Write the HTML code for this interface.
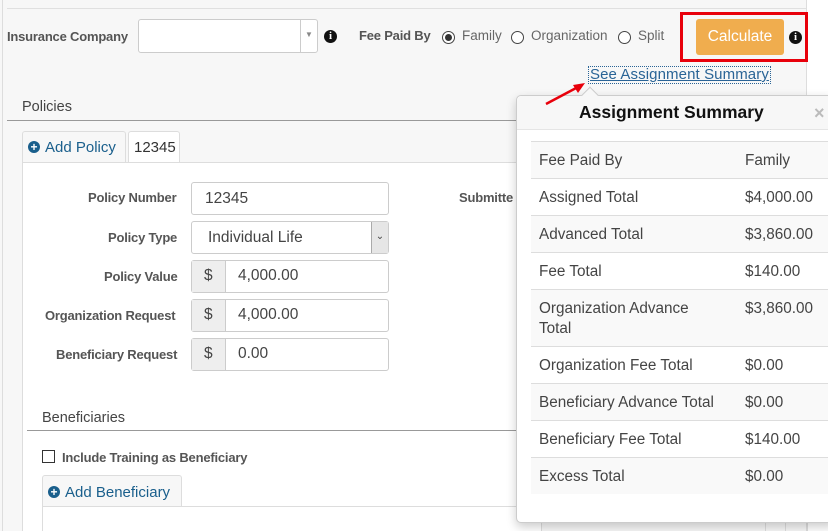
<!DOCTYPE html>
<html><head><meta charset="utf-8"><style>
*{box-sizing:border-box;margin:0;padding:0}
html,body{width:828px;height:531px;overflow:hidden}
body{background:#f7f7f7;font-family:"Liberation Sans",sans-serif;color:#444;position:relative}
.a{position:absolute}
.lbl{font-weight:bold;font-size:13px;color:#555;letter-spacing:-0.2px}
.inp{position:absolute;background:#fff;border:1px solid #ccc;border-radius:3px;font-size:15.5px;color:#444}
.info{position:absolute;width:13px;height:13px;border-radius:50%;background:#111;color:#fff;font:bold 11px "Liberation Serif",serif;text-align:center;line-height:13px}
.radio{position:absolute;width:13px;height:13px;border:1px solid #444;border-radius:50%;background:#fff}
.t{font-size:13.5px;color:#666}
.plus{display:inline-block;width:12px;height:12px;border-radius:50%;background:#1a5f8c;color:#fff;font:bold 12px/12px "Liberation Sans";text-align:center;vertical-align:1px;margin-right:5px}
.row{position:absolute;left:531px;width:297px;border-top:1px solid #ddd;font-size:15.3px;color:#444}
.row span{position:absolute;top:10px}
</style></head><body>
<div class="a" style="left:2px;top:0;width:1px;height:531px;background:#ddd"></div>
<div class="a" style="left:7px;top:8px;width:799px;height:1px;background:#e0e0e0"></div>
<div class="a" style="left:806px;top:0;width:22px;height:531px;background:#fff;border-left:1px solid #ddd"></div>

<div class="a lbl" style="left:7px;top:29px">Insurance Company</div>
<div class="inp" style="left:138px;top:19px;width:180px;height:34px"><div class="a" style="left:161px;top:0;width:1px;height:32px;background:#ccc"></div><div class="a" style="left:166px;top:10px;font-size:8px;color:#888">▼</div></div>
<div class="info" style="left:324px;top:30px">i</div>
<div class="a lbl" style="left:359px;top:28px">Fee Paid By</div>
<div class="radio" style="left:442px;top:31px"><div style="width:7px;height:7px;border-radius:50%;background:#333;margin:2px"></div></div>
<div class="a t" style="left:462px;top:28px">Family</div>
<div class="radio" style="left:511px;top:31px"></div>
<div class="a t" style="left:531px;top:28px">Organization</div>
<div class="radio" style="left:618px;top:31px"></div>
<div class="a t" style="left:638px;top:28px">Split</div>
<div class="a" style="left:680px;top:12px;width:128px;height:50px;border:3px solid #e8000b"></div>
<div class="a" style="left:696px;top:19px;width:88px;height:36px;background:#f0ad4e;border-radius:3px;color:#fff;font-size:15.5px;text-align:center;line-height:36px">Calculate</div>
<div class="info" style="left:789px;top:31px">i</div>
<div class="a" style="left:588px;top:66px;font-size:15px;color:#2a6496;text-decoration:underline;border:1px dotted #2a6496;padding:0 1px;line-height:16px;letter-spacing:0.1px">See Assignment Summary</div>

<div class="a" style="left:22px;top:99px;font-size:14.5px;color:#444">Policies</div>
<div class="a" style="left:7px;top:120px;width:520px;height:1px;background:#999"></div>
<div class="a" style="left:22px;top:131px;width:104px;height:31px;border:1px solid #ddd;border-bottom:none;border-radius:3px 3px 0 0;font-size:15px;color:#1a5f8c;padding:7px 0 0 5px"><span class="plus">+</span>Add Policy</div>
<div class="a" style="left:128px;top:131px;width:52px;height:32px;background:#fff;border:1px solid #ddd;border-bottom:none;border-radius:3px 3px 0 0;font-size:15px;color:#333;padding:7px 0 0 5px">12345</div>
<div class="a" style="left:22px;top:162px;width:520px;height:369px;background:#fff;border:1px solid #ddd;border-bottom:none"></div>

<div class="a lbl" style="left:88px;top:190px">Policy Number</div>
<div class="inp" style="left:191px;top:182px;width:198px;height:33px;padding:7px 0 0 13px">12345</div>
<div class="a lbl" style="left:459px;top:190px">Submitte</div>
<div class="a lbl" style="left:108px;top:230px">Policy Type</div>
<div class="inp" style="left:191px;top:221px;width:198px;height:33px;padding:7px 0 0 16px">Individual Life<div class="a" style="left:179px;top:0;width:17px;height:31px;background:#e6e6e6;border-left:1px solid #aaa;font-size:10px;text-align:center;line-height:30px">⌄</div></div>
<div class="a lbl" style="left:104px;top:269px">Policy Value</div>
<div class="inp" style="left:191px;top:260px;width:198px;height:33px"><div class="a" style="left:0;top:0;width:34px;height:31px;background:#eee;border-right:1px solid #ccc;padding:6px 0 0 12px">$</div><div class="a" style="left:46px;top:6px">4,000.00</div></div>
<div class="a lbl" style="left:45px;top:308px">Organization Request</div>
<div class="inp" style="left:191px;top:299px;width:198px;height:33px"><div class="a" style="left:0;top:0;width:34px;height:31px;background:#eee;border-right:1px solid #ccc;padding:6px 0 0 12px">$</div><div class="a" style="left:46px;top:6px">4,000.00</div></div>
<div class="a lbl" style="left:56px;top:347px">Beneficiary Request</div>
<div class="inp" style="left:191px;top:338px;width:198px;height:33px"><div class="a" style="left:0;top:0;width:34px;height:31px;background:#eee;border-right:1px solid #ccc;padding:6px 0 0 12px">$</div><div class="a" style="left:46px;top:6px">0.00</div></div>

<div class="a" style="left:42px;top:410px;font-size:14.5px;color:#444">Beneficiaries</div>
<div class="a" style="left:27px;top:430px;width:500px;height:1px;background:#999"></div>
<div class="a" style="left:42px;top:450px;width:13px;height:13px;border:1px solid #333"></div>
<div class="a lbl" style="left:62px;top:450px">Include Training as Beneficiary</div>
<div class="a" style="left:42px;top:475px;width:140px;height:32px;background:#f7f7f7;border:1px solid #ddd;border-bottom:none;border-radius:3px 3px 0 0;font-size:15px;color:#1a5f8c;padding:8px 0 0 5px"><span class="plus">+</span>Add Beneficiary</div>
<div class="a" style="left:42px;top:506px;width:766px;height:30px;border:1px solid #ddd"></div>
<div class="a" style="left:765px;top:506px;width:1px;height:30px;background:#ddd"></div>
<div class="a" style="left:785px;top:506px;width:1px;height:30px;background:#ddd"></div>

<div class="a" style="left:516px;top:95px;width:320px;height:428px;background:#fff;border:1px solid #ccc;border-radius:5px;box-shadow:0 4px 10px rgba(0,0,0,.2)"></div>
<div class="a" style="left:584px;top:89px;width:12px;height:12px;background:#f7f7f7;border-left:1px solid #ccc;border-top:1px solid #ccc;transform:rotate(45deg)"></div>
<div class="a" style="left:517px;top:96px;width:311px;height:34px;background:#f7f7f7;border-bottom:1px solid #e5e5e5;border-radius:5px 0 0 0"></div>
<div class="a" style="left:579px;top:102px;font-size:17.5px;font-weight:bold;color:#111">Assignment Summary</div>
<div class="a" style="left:814px;top:103px;font-size:18px;font-weight:bold;color:#bbb">×</div>
<svg class="a" style="left:540px;top:78px;z-index:5" width="50" height="32"><line x1="6" y1="26" x2="38" y2="9" stroke="#e8000b" stroke-width="2.5"/><polygon points="45,5 33,7 38,15" fill="#e8000b"/></svg>

<div class="row" style="top:141px;height:37px;background:#f9f9f9"><span style="left:8px">Fee Paid By</span><span style="left:214px">Family</span></div>
<div class="row" style="top:178px;height:37px"><span style="left:8px">Assigned Total</span><span style="left:214px">$4,000.00</span></div>
<div class="row" style="top:215px;height:37px;background:#f9f9f9"><span style="left:8px">Advanced Total</span><span style="left:214px">$3,860.00</span></div>
<div class="row" style="top:252px;height:37px"><span style="left:8px">Fee Total</span><span style="left:214px">$140.00</span></div>
<div class="row" style="top:289px;height:57px;background:#f9f9f9"><span style="left:8px;line-height:20px;top:9px">Organization Advance<br>Total</span><span style="left:214px">$3,860.00</span></div>
<div class="row" style="top:346px;height:37px"><span style="left:8px">Organization Fee Total</span><span style="left:214px">$0.00</span></div>
<div class="row" style="top:383px;height:37px;background:#f9f9f9"><span style="left:8px">Beneficiary Advance Total</span><span style="left:214px">$0.00</span></div>
<div class="row" style="top:420px;height:37px"><span style="left:8px">Beneficiary Fee Total</span><span style="left:214px">$140.00</span></div>
<div class="row" style="top:457px;height:37px;background:#f9f9f9"><span style="left:8px">Excess Total</span><span style="left:214px">$0.00</span></div>
</body></html>
